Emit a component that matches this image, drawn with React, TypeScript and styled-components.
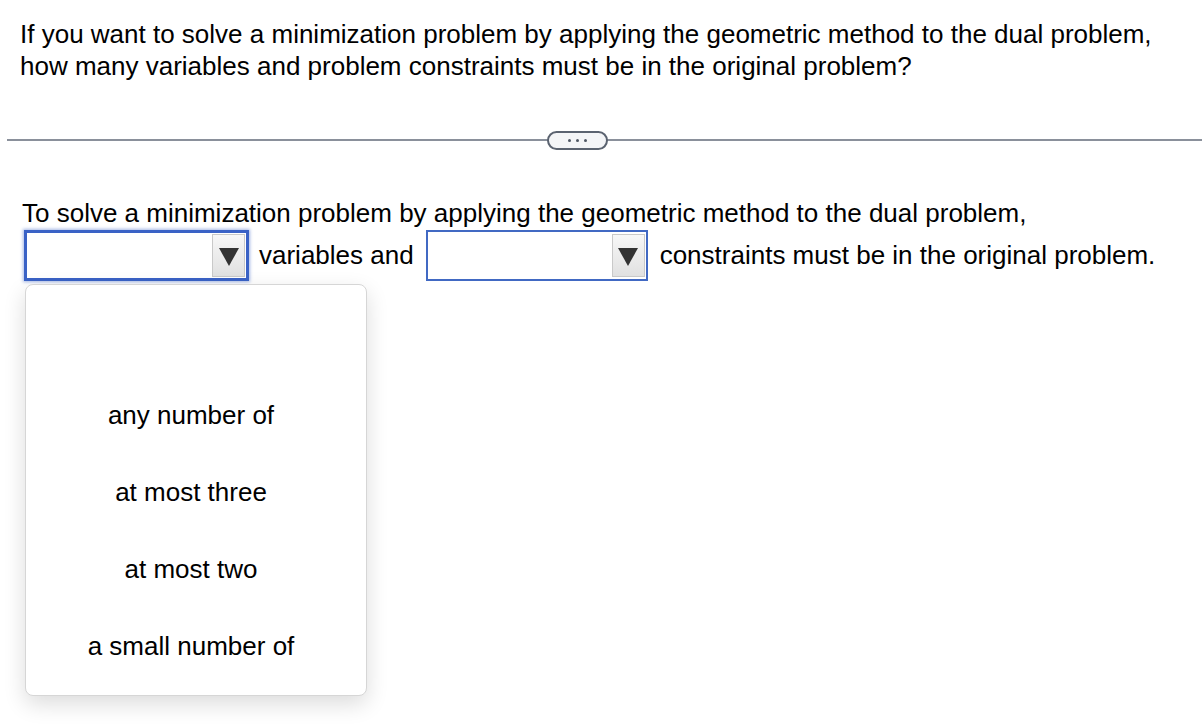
import React from 'react';
import styled, { createGlobalStyle } from 'styled-components';

const GlobalStyle = createGlobalStyle`
  html, body {
    margin: 0;
    padding: 0;
    background: #ffffff;
  }
  body {
    font-family: "Liberation Sans", Arial, Helvetica, sans-serif;
    color: #000000;
  }
`;

const options = ['any number of', 'at most three', 'at most two', 'a small number of'];

const App: React.FC = () => {
  return (
    <>
      <GlobalStyle />
      <Page>
        <Question>
          If you want to solve a minimization problem by applying the geometric method to the dual problem,
          <br />
          how many variables and problem constraints must be in the original problem?
        </Question>

        <Divider>
          <ExpandPill aria-label="more">
            <Dot />
            <Dot />
            <Dot />
          </ExpandPill>
        </Divider>

        <Answer>
          <AnswerLine>To solve a minimization problem by applying the geometric method to the dual problem,</AnswerLine>
          <SelectRow>
            <SelectWrap>
              <SelectBox focused>
                <ArrowButton>
                  <Triangle />
                </ArrowButton>
              </SelectBox>
              <OptionList role="listbox">
                <OptionItem aria-hidden="true" />
                {options.map((o) => (
                  <OptionItem key={o} role="option">
                    {o}
                  </OptionItem>
                ))}
              </OptionList>
            </SelectWrap>
            <Word before={10} after={12}>
              variables and
            </Word>
            <SelectBox>
              <ArrowButton>
                <Triangle />
              </ArrowButton>
            </SelectBox>
            <Word before={12} after={0}>
              constraints must be in the original problem.
            </Word>
          </SelectRow>
        </Answer>
      </Page>
    </>
  );
};

const Page = styled.div`
  width: 1202px;
  height: 724px;
  overflow: hidden;
`;

const Question = styled.p`
  margin: 0;
  padding: 18px 0 0 20px;
  font-size: 26px;
  line-height: 32px;
`;

const Divider = styled.div`
  margin: 48px 0 0 7px;
  height: 20px;
  display: flex;
  align-items: center;
  justify-content: center;
  position: relative;

  &::before {
    content: '';
    position: absolute;
    left: 0;
    right: 0;
    top: 9px;
    height: 2px;
    background: #8a909b;
  }
`;

const ExpandPill = styled.button`
  position: relative;
  margin-left: -54px;
  width: 61px;
  height: 19px;
  border: 2px solid #5b6370;
  border-radius: 10px;
  background: #f4f5f7;
  display: flex;
  align-items: center;
  justify-content: center;
  gap: 5px;
  padding: 0;
`;

const Dot = styled.span`
  width: 3px;
  height: 3px;
  border-radius: 50%;
  background: #4f5763;
`;

const Answer = styled.div`
  padding: 48px 0 0 22px;
  font-size: 26px;
`;

const AnswerLine = styled.div`
  line-height: 30px;
`;

const SelectRow = styled.div`
  display: flex;
  align-items: center;
  margin-top: 2px;
  margin-left: 2px;
`;

const SelectWrap = styled.div`
  position: relative;
`;

const SelectBox = styled.div<{ focused?: boolean }>`
  box-sizing: border-box;
  width: ${(p) => (p.focused ? '225px' : '222px')};
  height: 51px;
  border: ${(p) => (p.focused ? '3px solid #3a62c6' : '2px solid #4169c3')};
  box-shadow: ${(p) => (p.focused ? '0 0 3px 1px rgba(58, 98, 198, 0.45)' : 'none')};
  background: #ffffff;
  display: flex;
  justify-content: flex-end;
  align-items: center;
  padding-right: 1px;
`;

const ArrowButton = styled.div`
  box-sizing: border-box;
  width: 33px;
  height: 43px;
  border: 1px solid #c9c9c9;
  background: linear-gradient(#f7f7f7, #e1e1e1);
  display: flex;
  align-items: center;
  justify-content: center;
`;

const Triangle = styled.span`
  width: 0;
  height: 0;
  border-left: 10px solid transparent;
  border-right: 10px solid transparent;
  border-top: 18px solid #333333;
  margin-top: 2px;
`;

const Word = styled.span<{ before: number; after: number }>`
  margin: 0 ${(p) => p.after}px 0 ${(p) => p.before}px;
  white-space: nowrap;
`;

const OptionList = styled.div`
  position: absolute;
  top: 54px;
  left: 1px;
  box-sizing: border-box;
  width: 342px;
  height: 412px;
  padding: 15px 10px 9px 0;
  background: #ffffff;
  border: 1px solid #d6d6d6;
  border-radius: 8px;
  box-shadow: 0 8px 22px rgba(0, 0, 0, 0.14);
  display: flex;
  flex-direction: column;
`;

const OptionItem = styled.div`
  height: 77px;
  flex-shrink: 0;
  display: flex;
  align-items: center;
  justify-content: center;
  font-size: 26px;
`;

export default App;
